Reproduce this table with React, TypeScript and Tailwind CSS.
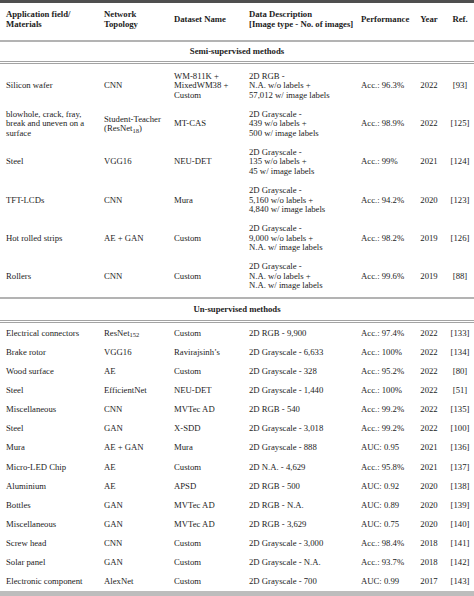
import React from "react";

type Cell = React.ReactNode;
type Row = [Cell, Cell, Cell, Cell, Cell, Cell, Cell];

const cols = "grid grid-cols-[98px_70px_75px_112px_57px_34px_28px] items-center";

const lines = (...parts: React.ReactNode[]) => (
  <>
    {parts.map((p, i) => (
      <React.Fragment key={i}>
        {i > 0 && <br />}
        {p}
      </React.Fragment>
    ))}
  </>
);

const semiRows: Row[] = [
  [
    "Silicon wafer",
    "CNN",
    lines("WM-811K +", "MixedWM38 +", "Custom"),
    lines("2D RGB -", "N.A. w/o labels +", "57,012 w/ image labels"),
    "Acc.: 96.3%",
    "2022",
    "[93]",
  ],
  [
    lines("blowhole, crack, fray,", "break and uneven on a", "surface"),
    lines("Student-Teacher", <>(ResNet<sub>18</sub>)</>),
    "MT-CAS",
    lines("2D Grayscale -", "439 w/o labels +", "500 w/ image labels"),
    "Acc.: 98.9%",
    "2022",
    "[125]",
  ],
  [
    "Steel",
    "VGG16",
    "NEU-DET",
    lines("2D Grayscale -", "135 w/o labels +", "45 w/ image labels"),
    "Acc.: 99%",
    "2021",
    "[124]",
  ],
  [
    "TFT-LCDs",
    "CNN",
    "Mura",
    lines("2D Grayscale -", "5,160 w/o labels +", "4,840 w/ image labels"),
    "Acc.: 94.2%",
    "2020",
    "[123]",
  ],
  [
    "Hot rolled strips",
    "AE + GAN",
    "Custom",
    lines("2D Grayscale -", "9,000 w/o labels +", "N.A. w/ image labels"),
    "Acc.: 98.2%",
    "2019",
    "[126]",
  ],
  [
    "Rollers",
    "CNN",
    "Custom",
    lines("2D Grayscale -", "N.A. w/o labels +", "N.A. w/ image labels"),
    "Acc.: 99.6%",
    "2019",
    "[88]",
  ],
];

const unsupRows: Row[] = [
  ["Electrical connectors", <>ResNet<sub>152</sub></>, "Custom", "2D RGB - 9,900", "Acc.: 97.4%", "2022", "[133]"],
  ["Brake rotor", "VGG16", "Ravirajsinh\u2019s", "2D Grayscale - 6,633", "Acc.: 100%", "2022", "[134]"],
  ["Wood surface", "AE", "Custom", "2D Grayscale - 328", "Acc.: 95.2%", "2022", "[80]"],
  ["Steel", "EfficientNet", "NEU-DET", "2D Grayscale - 1,440", "Acc.: 100%", "2022", "[51]"],
  ["Miscellaneous", "CNN", "MVTec AD", "2D RGB - 540", "Acc.: 99.2%", "2022", "[135]"],
  ["Steel", "GAN", "X-SDD", "2D Grayscale - 3,018", "Acc.: 99.2%", "2022", "[100]"],
  ["Mura", "AE + GAN", "Mura", "2D Grayscale - 888", "AUC: 0.95", "2021", "[136]"],
  ["Micro-LED Chip", "AE", "Custom", "2D N.A. - 4,629", "Acc.: 95.8%", "2021", "[137]"],
  ["Aluminium", "AE", "APSD", "2D RGB - 500", "AUC: 0.92", "2020", "[138]"],
  ["Bottles", "GAN", "MVTec AD", "2D RGB - N.A.", "AUC: 0.89", "2020", "[139]"],
  ["Miscellaneous", "GAN", "MVTec AD", "2D RGB - 3,629", "AUC: 0.75", "2020", "[140]"],
  ["Screw head", "CNN", "Custom", "2D Grayscale - 3,000", "Acc.: 98.4%", "2018", "[141]"],
  ["Solar panel", "GAN", "Custom", "2D Grayscale - N.A.", "Acc.: 93.7%", "2018", "[142]"],
  ["Electronic component", "AlexNet", "Custom", "2D Grayscale - 700", "AUC: 0.99", "2017", "[143]"],
];

function TableRow({ row, height }: { row: Row; height: string }) {
  return (
    <div className={`${cols} ${height}`}>
      {row.map((cell, i) => (
        <div key={i} className={i >= 5 ? "text-center" : "pl-[6px]"}>
          {cell}
        </div>
      ))}
    </div>
  );
}

function DoubleRule() {
  return <div className="h-[3px] border-y border-[#a3a3a3]" />;
}

export default function App(): React.JSX.Element {
  return (
    <div className="w-[474px] h-[596px] overflow-hidden bg-white text-[#1c1c1c] font-['Liberation_Serif','Times_New_Roman',serif] text-[8.7px] leading-[9.5px] whitespace-nowrap">
      <div className="h-[3px] bg-[#4f4f4f]" />

      <div className={`${cols} h-[37px] pb-[4px] font-bold`}>
        <div className="pl-[6px]">{lines("Application field/", "Materials")}</div>
        <div className="pl-[6px]">{lines("Network", "Topology")}</div>
        <div className="pl-[6px]">Dataset Name</div>
        <div className="pl-[6px]">{lines("Data Description", "[Image type - No. of images]")}</div>
        <div className="pl-[6px]">Performance</div>
        <div className="text-center">Year</div>
        <div className="text-center">Ref.</div>
      </div>
      <div className="h-[2px] bg-[#b3b3b3]" />

      <div className="h-[19px] flex items-center justify-center font-bold">Semi-supervised methods</div>
      <DoubleRule />
      <div className="pt-[3px]">
        {semiRows.map((row, i) => (
          <TableRow key={i} row={row} height="h-[38.1px]" />
        ))}
      </div>
      <div className="mt-[1.5px] h-[2px] bg-[#b3b3b3]" />

      <div className="h-[21px] flex items-center justify-center font-bold">Un-supervised methods</div>
      <DoubleRule />
      <div className="pt-[1px]">
        {unsupRows.map((row, i) => (
          <TableRow key={i} row={row} height="h-[19.1px]" />
        ))}
      </div>
      <div className="h-[6px] bg-[#bdbdbd]" />
    </div>
  );
}
